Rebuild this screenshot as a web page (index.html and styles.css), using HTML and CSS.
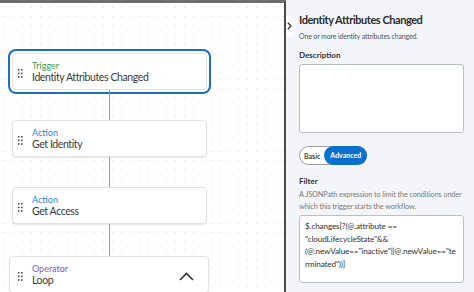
FILE: index.html
```html
<!DOCTYPE html>
<html lang="en">
<head>
    <meta charset="UTF-8">
    <title>Workflow Builder</title>
    <link rel="stylesheet" href="styles.css">
</head>
<body>

<div class="canvas">
    <div class="card selected">
        <span class="handle"><svg width="5" height="9" viewBox="0 0 5 9"><g fill="#555"><rect x="0" y="0" width="1.6" height="1.6"/><rect x="3" y="0" width="1.6" height="1.6"/><rect x="0" y="3.6" width="1.6" height="1.6"/><rect x="3" y="3.6" width="1.6" height="1.6"/><rect x="0" y="7.2" width="1.6" height="1.6"/><rect x="3" y="7.2" width="1.6" height="1.6"/></g></svg></span>
        <div class="card-text">
            <div class="kind trigger">Trigger</div>
            <div class="name">Identity Attributes Changed</div>
        </div>
    </div>
    <div class="link"></div>
    <div class="card">
        <span class="handle"><svg width="5" height="9" viewBox="0 0 5 9"><g fill="#555"><rect x="0" y="0" width="1.6" height="1.6"/><rect x="3" y="0" width="1.6" height="1.6"/><rect x="0" y="3.6" width="1.6" height="1.6"/><rect x="3" y="3.6" width="1.6" height="1.6"/><rect x="0" y="7.2" width="1.6" height="1.6"/><rect x="3" y="7.2" width="1.6" height="1.6"/></g></svg></span>
        <div class="card-text">
            <div class="kind action">Action</div>
            <div class="name">Get Identity</div>
        </div>
    </div>
    <div class="link"></div>
    <div class="card">
        <span class="handle"><svg width="5" height="9" viewBox="0 0 5 9"><g fill="#555"><rect x="0" y="0" width="1.6" height="1.6"/><rect x="3" y="0" width="1.6" height="1.6"/><rect x="0" y="3.6" width="1.6" height="1.6"/><rect x="3" y="3.6" width="1.6" height="1.6"/><rect x="0" y="7.2" width="1.6" height="1.6"/><rect x="3" y="7.2" width="1.6" height="1.6"/></g></svg></span>
        <div class="card-text">
            <div class="kind action">Action</div>
            <div class="name">Get Access</div>
        </div>
    </div>
    <div class="link long"></div>
    <div class="card operator">
        <span class="handle"><svg width="5" height="9" viewBox="0 0 5 9"><g fill="#555"><rect x="0" y="0" width="1.6" height="1.6"/><rect x="3" y="0" width="1.6" height="1.6"/><rect x="0" y="3.6" width="1.6" height="1.6"/><rect x="3" y="3.6" width="1.6" height="1.6"/><rect x="0" y="7.2" width="1.6" height="1.6"/><rect x="3" y="7.2" width="1.6" height="1.6"/></g></svg></span>
        <div class="card-text">
            <div class="kind op">Operator</div>
            <div class="name">Loop</div>
        </div>
        <svg class="collapse" width="15" height="9" viewBox="0 0 15 9"><path d="M1 8 L7.5 1.5 L14 8" fill="none" stroke="#333" stroke-width="1.6"/></svg>
    </div>
</div>

<div class="panel">
    <div class="panel-tab"><svg width="5" height="8" viewBox="0 0 5 8"><path d="M0.8 0.8 L4 4 L0.8 7.2" fill="none" stroke="#333" stroke-width="1.3"/></svg></div>
    <h2>Identity Attributes Changed</h2>
    <p class="sub">One or more identity attributes changed.</p>
    <label>Description</label>
    <div class="field desc"></div>

    <div class="switch">
        <span class="opt">Basic</span>
        <span class="opt on">Advanced</span>
    </div>

    <label>Filter</label>
    <p class="help">A JSONPath expression to limit the conditions under which this trigger starts the workflow.</p>
    <div class="field filter">$.changes[?(@.attribute ==<br>"cloudLifecycleState"&amp;&amp;<br>(@.newValue=="inactive"||@.newValue=="te<br>rminated"))]</div>
</div>

</body>
</html>
```

FILE: styles.css
```css
body {
    margin: 0;
    font-family: Lato, "Open Sans", sans-serif;
    display: flex;
    height: 292px;
    overflow: hidden;
    color: #333;
}
.canvas {
    width: 286px;
    flex-shrink: 0;
    box-sizing: border-box;
    border-top: 3px solid #6e6e6e;
    border-right: 2px solid #4a4a4a;
    padding: 50px 0 0 12px;
    background-color: #fff;
    background-image: radial-gradient(circle, #d9d9d9 0.8px, transparent 1px);
    background-size: 9px 9px;
}
.card {
    width: 195px;
    height: 37px;
    box-sizing: border-box;
    display: flex;
    align-items: center;
    padding-left: 5px;
    background: #fff;
    border: 1px solid #e3e3e3;
    border-radius: 4px;
    box-shadow: 0 1px 2px rgba(0, 0, 0, 0.1);
}
.card.selected {
    box-shadow: 0 0 0 2px #fff, 0 0 0 4px #1a6ec4;
}
.card.operator {
    width: 200px;
    margin-left: -3px;
    padding-left: 8px;
}
.handle {
    display: flex;
    width: 5px;
    margin-top: 4px;
}
.card-text {
    margin-left: 9px;
    flex: 1;
}
.kind {
    font-size: 9px;
    line-height: 11px;
}
.trigger { color: #3a9b59; }
.action { color: #2f7fcf; }
.op { color: #8a56c9; }
.name {
    font-size: 10.5px;
    line-height: 13px;
    letter-spacing: -0.4px;
    color: #3a3a3a;
}
.collapse {
    margin-right: 14px;
    margin-top: 4px;
}
.link {
    width: 1px;
    height: 30px;
    margin-left: 97px;
    background: #9a9a9a;
}
.link.long {
    height: 32px;
}
.panel {
    width: 188px;
    flex-shrink: 0;
    box-sizing: border-box;
    position: relative;
    overflow: hidden;
    background: #f3f5f8;
    padding: 13px 10px 0 13px;
}
.panel-tab {
    position: absolute;
    left: 0;
    top: 15px;
    width: 10px;
    height: 22px;
    background: #fff;
    border-radius: 0 11px 11px 0;
    display: flex;
    align-items: center;
    padding-left: 1px;
    box-sizing: border-box;
}
h2 {
    margin: 0;
    font-size: 11px;
    line-height: 14px;
    font-weight: bold;
    letter-spacing: -0.45px;
    color: #2c2c2c;
}
.sub {
    margin: 4px 0 0;
    font-size: 7px;
    line-height: 10px;
    letter-spacing: -0.15px;
    color: #555;
}
label {
    display: block;
    margin-top: 9px;
    font-size: 8px;
    line-height: 10px;
    font-weight: bold;
    color: #333;
}
.field {
    background: #fff;
    border: 1px solid #b9bfc5;
    border-radius: 3px;
    box-sizing: border-box;
}
.desc {
    margin-top: 4px;
    height: 69px;
}
.switch {
    display: inline-flex;
    align-items: center;
    margin-top: 13px;
    height: 19px;
    box-sizing: border-box;
    border: 1px solid #9aa0a6;
    border-radius: 10px;
    background: #fff;
}
.opt {
    font-size: 7px;
    font-weight: bold;
    color: #444;
    padding: 0 4px 0 4px;
}
.opt.on {
    background: #0b6fd0;
    color: #fff;
    height: 19px;
    line-height: 19px;
    margin: -1px -1px -1px 0;
    padding: 0 6px;
    border-radius: 10px;
}
.switch + label {
    margin-top: 11px;
}
.help {
    margin: 3px 0 0;
    font-size: 7.3px;
    line-height: 12px;
    letter-spacing: -0.1px;
    color: #7a7a7a;
}
.filter {
    margin-top: 2px;
    height: 68px;
    padding: 4px 5px;
    font-size: 8.2px;
    line-height: 12.5px;
    letter-spacing: -0.15px;
    white-space: nowrap;
    overflow: hidden;
    color: #333;
}
```
